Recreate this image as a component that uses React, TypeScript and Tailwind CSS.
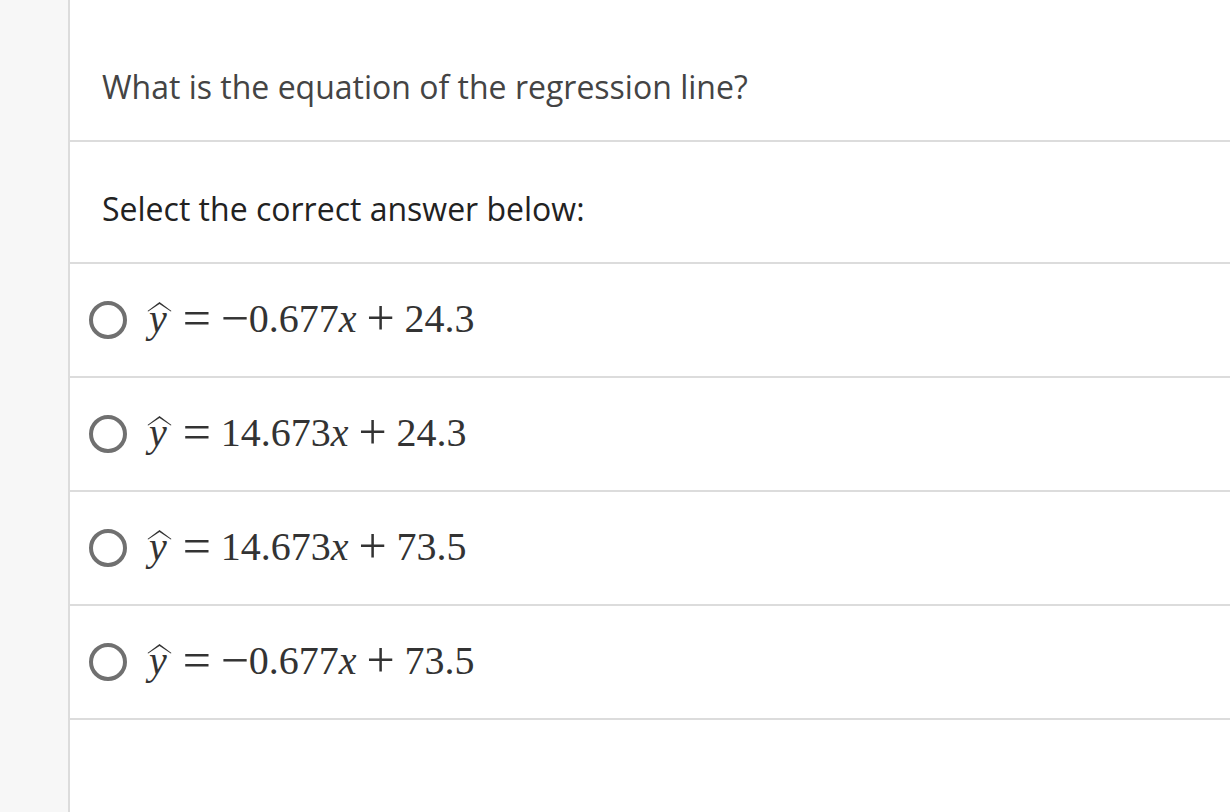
import React from 'react';

const options = [
  { a: '−0.677', b: '24.3' },
  { a: '14.673', b: '24.3' },
  { a: '14.673', b: '73.5' },
  { a: '−0.677', b: '73.5' },
];

const YHat: React.FC = () => (
  <span className="relative inline-block italic pr-[3px]">
    y
    <svg
      className="absolute left-[-2px] top-[2px]"
      width="25"
      height="11"
      viewBox="0 0 25 11"
    >
      <path d="M0.5 10 L12.5 1 L24.5 10 L23.8 10.6 L12.5 3 L1.2 10.6 Z" fill="#333" />
    </svg>
  </span>
);

const Op: React.FC<{ children: React.ReactNode; className: string }> = ({ children, className }) => (
  <span className={`inline-block text-center text-[50px] leading-[40px] align-[-3px] ${className}`}>
    {children}
  </span>
);

const Equation: React.FC<{ a: string; b: string }> = ({ a, b }) => (
  <span className="text-[40px] leading-[40px] text-[#333] font-['Liberation_Serif',serif] whitespace-nowrap -mt-[4px]">
    <YHat />
    <Op className="w-[27px] ml-[13px] mr-[11px]">=</Op>
    {a.startsWith('−') ? (
      <>
        <Op className="w-[27px] mr-[1px]">−</Op>
        {a.slice(1)}
      </>
    ) : (
      a
    )}
    <span className="italic">x</span>
    <Op className="w-[28px] ml-[10px] mr-[10px]">+</Op>
    {b}
  </span>
);

export default function App() {
  return (
    <div className="flex min-h-[812px] bg-white font-['Open_Sans',sans-serif]">
      <div className="w-[70px] shrink-0 bg-[#f7f7f7] border-r-2 border-[#dcdcdc]" />
      <div className="flex-1">
        <div className="h-[142px] border-b-2 border-[#dcdcdc] flex items-center pt-[34px] pl-[32px]">
          <p className="text-[32px] text-[#444]">What is the equation of the regression line?</p>
        </div>
        <div className="h-[122px] border-b-2 border-[#dcdcdc] flex items-center pt-[14px] pl-[32px]">
          <p className="text-[32px] text-[#222]">Select the correct answer below:</p>
        </div>
        {options.map((o, i) => (
          <div
            key={i}
            className="h-[114px] border-b-2 border-[#dcdcdc] flex items-center pl-[19px] gap-[22px]"
          >
            <span className="w-[38px] h-[38px] rounded-full border-[4px] border-[#707070] shrink-0" />
            <Equation a={o.a} b={o.b} />
          </div>
        ))}
      </div>
    </div>
  );
}
